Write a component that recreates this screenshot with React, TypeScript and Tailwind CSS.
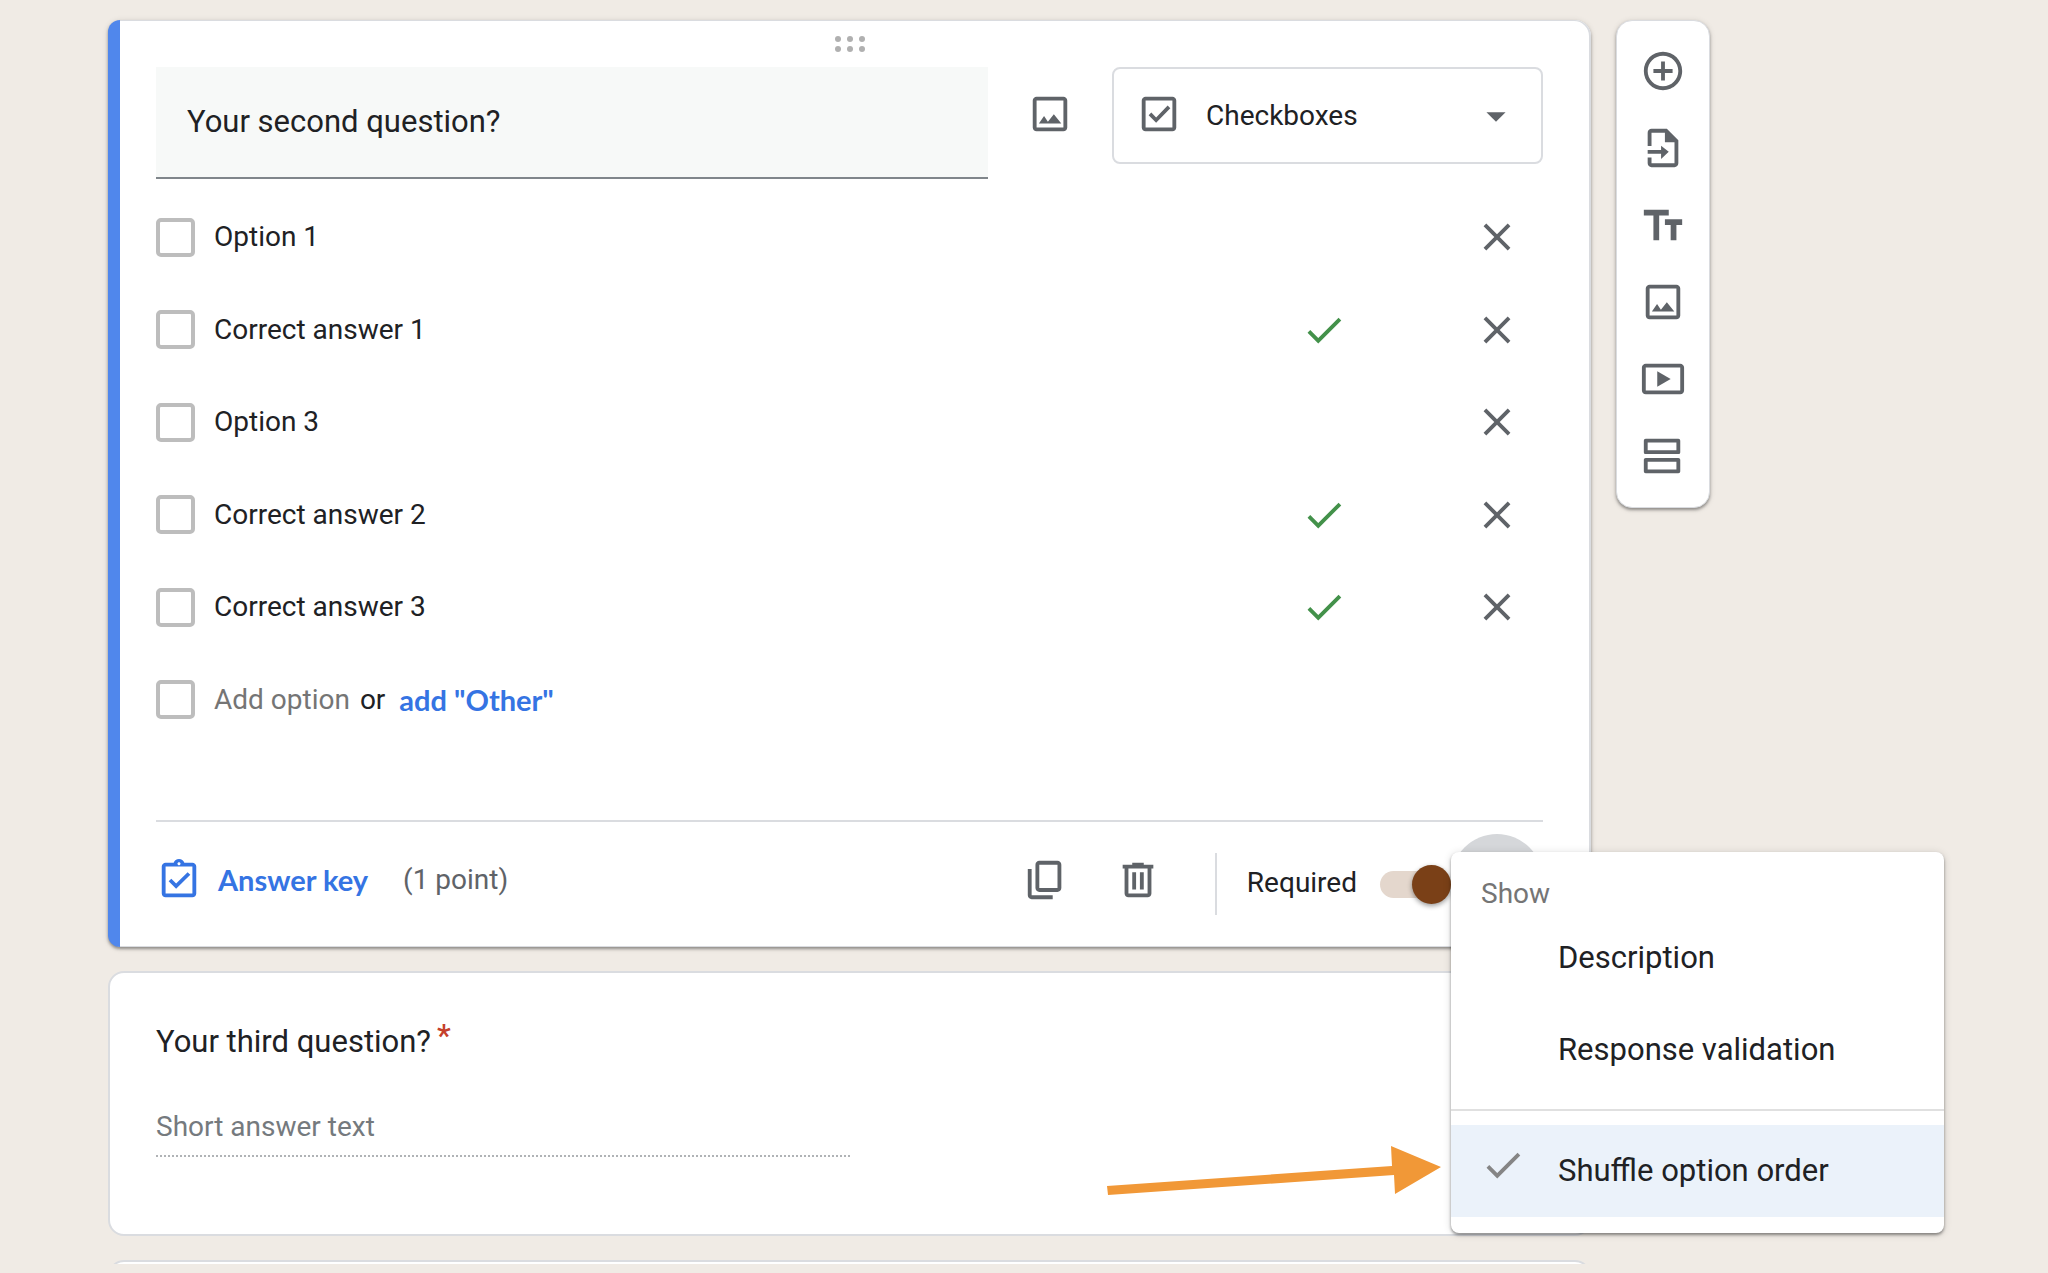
import { useState } from "react"
import type { ReactNode } from "react"
import { MdAddCircleOutline, MdArrowDropDown, MdCheck, MdClose } from "react-icons/md"

const OPTIONS = [
  { label: "Option 1", correct: false },
  { label: "Correct answer 1", correct: true },
  { label: "Option 3", correct: false },
  { label: "Correct answer 2", correct: true },
  { label: "Correct answer 3", correct: true },
]

const BOX = "size-[39px] shrink-0 appearance-none rounded-[5px] border-4 border-[#bdbdbd] bg-white"

/* ── Icons ── */
const Icon = ({ children }: { children: ReactNode }) => (
  <svg viewBox="0 0 24 24" className="size-[46px] shrink-0" fill="currentColor" aria-hidden="true">
    {children}
  </svg>
)

const ImageIcon = () => (
  <Icon>
    <path d="M19 5v14H5V5h14m0-2H5c-1.100 0-2 .9-2 2v14c0 1.100.9 2 2 2h14c1.100 0 2-.9 2-2V5c0-1.100-.9-2-2-2z" />
    <path d="M6.200 17h11.700L14 12.100l-3.100 3.900L8.900 13z" />
  </Icon>
)

const CheckboxIcon = () => (
  <Icon>
    <path d="M19 5v14H5V5h14m0-2H5c-1.100 0-2 .9-2 2v14c0 1.100.9 2 2 2h14c1.100 0 2-.9 2-2V5c0-1.100-.9-2-2-2z" />
    <path d="M17.900 9l-1.400-1.400-6 6.200-2.500-2.600L6.600 12.600l3.900 4z" />
  </Icon>
)

const ImportIcon = () => (
  <Icon>
    <path d="M14 2H6c-1.100 0-2 .9-2 2v7h2V4h7v5h5v11H6v-3H4v3c0 1.100.9 2 2 2h12c1.100 0 2-.9 2-2V8z" />
    <path d="M4 13v2h7v2.800l4-3.800-4-3.200V13z" />
  </Icon>
)

const TitleIcon = () => (
  <Icon>
    <path d="M2 4v3h5v13h3V7h5V4zM13 9v3h3v8h3v-8h3V9z" />
  </Icon>
)

const VideoIcon = () => (
  <Icon>
    <path d="M21 4H3c-1.100 0-2 .9-2 2v12c0 1.100.9 2 2 2h18c1.100 0 2-.9 2-2V6c0-1.100-.9-2-2-2zm0 14H3V6h18z" />
    <path d="M9 8v8l7-4z" />
  </Icon>
)

const SectionIcon = () => (
  <Icon>
    <path d="M20 3H3c-.6 0-1 .4-1 1v6c0 .6.4 1 1 1h17c.6 0 1-.4 1-1V4c0-.6-.4-1-1-1zm-1 6H4V5h15zM20 13H3c-.6 0-1 .4-1 1v6c0 .6.4 1 1 1h17c.6 0 1-.4 1-1v-6c0-.6-.4-1-1-1zm-1 6H4v-4h15z" />
  </Icon>
)

const AnswerKeyIcon = () => (
  <Icon>
    <path
      fillRule="evenodd"
      d="M19 3h-4.200C14.400 1.800 13.300 1 12 1s-2.400.8-2.800 2H5c-1.100 0-2 .9-2 2v14c0 1.100.9 2 2 2h14c1.100 0 2-.9 2-2V5c0-1.100-.9-2-2-2zm-7-.2c.4 0 .8.300.8.700s-.4.800-.8.800-.8-.4-.8-.8.4-.7.800-.7zM19 19H5V5h14z"
    />
    <path d="M17.900 9.300l-1.400-1.400-6 5.900-2.500-2.500-1.400 1.400 3.900 3.900z" />
  </Icon>
)

const CopyIcon = () => (
  <Icon>
    <path d="M18 2H8.500c-1.100 0-2 .9-2 2v12.200c0 1.100.9 2 2 2H18c1.100 0 2-.9 2-2V4c0-1.100-.9-2-2-2zm0 14.200H8.500V4H18z" />
    <path d="M2.500 6.200h2V20h11v2h-11c-1.100 0-2-.9-2-2z" />
  </Icon>
)

const TrashIcon = () => (
  <Icon>
    <path d="M15 4V3H9v1H4v2h1v13c0 1.100.9 2 2 2h10c1.100 0 2-.9 2-2V6h1V4zm2 15H7V6h10z" />
    <path d="M9 8h2v9H9zM13 8h2v9h-2z" />
  </Icon>
)

const TOOLS = [
  { label: "Add question", icon: <MdAddCircleOutline className="size-[46px]" /> },
  { label: "Import questions", icon: <ImportIcon /> },
  { label: "Add title and description", icon: <TitleIcon /> },
  { label: "Add image", icon: <ImageIcon /> },
  { label: "Add video", icon: <VideoIcon /> },
  { label: "Add section", icon: <SectionIcon /> },
]

/* ── Menu under the "more" button ── */
const MoreMenu = () => (
  <div
    role="menu"
    className="absolute top-[18px] left-0 z-20 w-[493px] rounded-lg bg-white pb-4 text-[31px] leading-10 text-[#202124] shadow-[0_2px_3px_rgba(0,0,0,0.4),0_1px_8px_rgba(0,0,0,0.14)]"
  >
    <p className="px-[30px] pt-6 text-[28px] leading-9 text-[#757575]">Show</p>
    <button role="menuitem" className="flex h-[92px] w-full items-center pl-[107px]">
      Description
    </button>
    <button role="menuitem" className="flex h-[92px] w-full items-center pl-[107px]">
      Response validation
    </button>
    <hr className="mt-[13px] mb-[14px] border-t-2 border-[#e0e0e0]" />
    <button
      role="menuitemcheckbox"
      aria-checked="true"
      className="flex h-[92px] w-full items-center gap-8 bg-[#ebf2fa] pl-[29px]"
    >
      <MdCheck className="mb-3 size-[46px] text-[#858585]" />
      Shuffle option order
    </button>

    {/* Pointer to the shuffle entry */}
    <svg
      viewBox="0 0 336 50"
      className="pointer-events-none absolute right-full bottom-[38px] mr-2 h-[50px] w-[336px]"
      fill="#f19837"
      aria-hidden="true"
    >
      <path d="M0 41l285-20-1-20 50 21-46 27-1-19L1 50z" />
    </svg>
  </div>
)

const CardFooter = () => {
  const [required, setRequired] = useState(true)

  return (
    <div className="flex items-center border-t-2 border-[#dadce0] pt-3 text-[28px] leading-9">
      <button className="flex items-center gap-4 font-['Lato',sans-serif] text-[29px] font-bold text-[#3574e3]">
        <AnswerKeyIcon />
        Answer key
      </button>
      <span className="ml-[35px] text-[#5f6368]">(1 point)</span>

      <div className="ml-auto flex items-center text-[#5f6368]">
        <button aria-label="Duplicate question" className="mr-[46px]">
          <CopyIcon />
        </button>
        <button aria-label="Delete question">
          <TrashIcon />
        </button>
        <span className="mt-2 mr-[30px] ml-[54px] h-[62px] w-0.5 bg-[#dadce0]" />
        <label htmlFor="required" className="pt-1.5 text-[#202124]">
          Required
        </label>
        <span className="ml-[23px] flex h-10 w-[71px] items-center pt-2">
          <input
            id="required"
            type="checkbox"
            role="switch"
            checked={required}
            onChange={(e) => setRequired(e.target.checked)}
            className="relative h-[27px] w-[70px] appearance-none rounded-full bg-[#e4d7cd] after:absolute after:-top-1.5 after:left-0 after:size-[39px] after:rounded-full after:bg-[#7a4017] after:shadow-[0_2px_5px_rgba(0,0,0,0.4)] checked:after:left-8"
          />
        </span>
      </div>

      <div className="relative">
        <button aria-label="More options" aria-expanded="true" className="block size-[92px] rounded-full bg-[#d5d7da]" />
        <MoreMenu />
      </div>
    </div>
  )
}

const QuestionCard = () => {
  const [title, setTitle] = useState("Your second question?")

  return (
    <section
      aria-label="Second question"
      className="rounded-l-xl rounded-r-2xl border-l-[12px] border-[#5087ec] bg-white pr-12 pb-[21px] pl-9 shadow-[inset_-1px_0_0_1px_#dadce0,0_2px_3px_rgba(0,0,0,0.35),0_1px_6px_rgba(0,0,0,0.12)]"
    >
      {/* Drag handle */}
      <div className="flex h-[47px] items-center justify-center">
        <svg viewBox="0 0 30 18" className="h-[18px] w-[30px]" fill="#b0b0b0" aria-hidden="true">
          {[3, 15, 27].map((x) => (
            <g key={x}>
              <circle cx={x} cy="4" r="3" />
              <circle cx={x} cy="14" r="3" />
            </g>
          ))}
        </svg>
      </div>

      <div className="flex items-start">
        <input
          aria-label="Question"
          value={title}
          onChange={(e) => setTitle(e.target.value)}
          className="h-28 min-w-0 flex-1 border-b-2 border-[#80868b] bg-[#f7f9f8] px-[31px] pb-0.5 text-[31px] leading-10 outline-none"
        />
        <button aria-label="Add image to question" className="mx-[39px] mt-6 text-[#5f6368]">
          <ImageIcon />
        </button>
        <div className="relative w-[431px] text-[#5f6368]">
          <select
            aria-label="Question type"
            className="h-[97px] w-full appearance-none rounded-lg border-2 border-[#dadce0] bg-white pl-[92px] text-[28px] text-[#202124]"
          >
            <option>Checkboxes</option>
          </select>
          <span className="pointer-events-none absolute top-6 left-6">
            <CheckboxIcon />
          </span>
          <MdArrowDropDown className="pointer-events-none absolute top-[26px] right-6 size-[46px]" />
        </div>
      </div>

      {/* Options */}
      <ul className="mt-3 grid h-[555px] grid-rows-6 text-[28px] leading-9">
        {OPTIONS.map((option) => (
          <li key={option.label} className="flex items-center text-[#5f6368]">
            <label className="flex flex-1 items-center gap-[19px] text-[#202124]">
              <input type="checkbox" className={BOX} />
              {option.label}
            </label>
            {option.correct && <MdCheck className="mr-[127px] size-[46px] text-[#43914a]" />}
            <button aria-label={"Remove " + option.label} className="mr-[23px]">
              <MdClose className="size-[46px]" />
            </button>
          </li>
        ))}
        <li className="flex items-center">
          <input type="checkbox" aria-label="New option" className={BOX} />
          <button className="ml-[19px] text-[#757575]">Add option</button>
          <span className="mr-[14px] ml-[10px]">or</span>
          <button className="font-['Lato',sans-serif] text-[29px] font-bold text-[#3574e3]">add "Other"</button>
        </li>
      </ul>

      <div className="mt-[74px]">
        <CardFooter />
      </div>
    </section>
  )
}

export default function App() {
  return (
    <div className="min-h-screen bg-[#f0ebe5] font-['Roboto',sans-serif] text-[#202124]">
      <main className="flex items-start gap-[25px] pt-5 pr-[338px] pl-[108px]">
        <div className="flex min-w-0 flex-1 flex-col gap-6">
          <QuestionCard />

          <section
            aria-label="Third question"
            className="rounded-2xl border-2 border-[#dadce0] bg-white px-[46px] pt-[49px] pb-[77px]"
          >
            <h2 className="flex items-start gap-1.5 text-[31px] leading-10">
              Your third question?
              <span className="leading-7 font-medium text-[#c5402b]">*</span>
            </h2>
            <input
              aria-label="Short answer"
              placeholder="Short answer text"
              disabled
              className="mt-[43px] block h-[52px] w-1/2 border-b-2 border-dotted border-[#b0b3b6] bg-transparent pb-2 text-[28px] placeholder:text-[#757a7e]"
            />
          </section>

          {/* Top edge of the next card */}
          <div className="h-1 overflow-hidden">
            <div className="h-10 rounded-2xl border-2 border-[#dadce0] bg-white" />
          </div>
        </div>

        <nav
          aria-label="Form tools"
          className="flex w-[94px] flex-col rounded-2xl border border-[#dadce0] bg-white pt-[11px] pb-[13px] text-[#5f6368] shadow-[0_2px_3px_rgba(0,0,0,0.35),0_1px_6px_rgba(0,0,0,0.12)]"
        >
          {TOOLS.map((tool) => (
            <button key={tool.label} aria-label={tool.label} className="flex h-[77px] items-center justify-center">
              {tool.icon}
            </button>
          ))}
        </nav>
      </main>
    </div>
  )
}
